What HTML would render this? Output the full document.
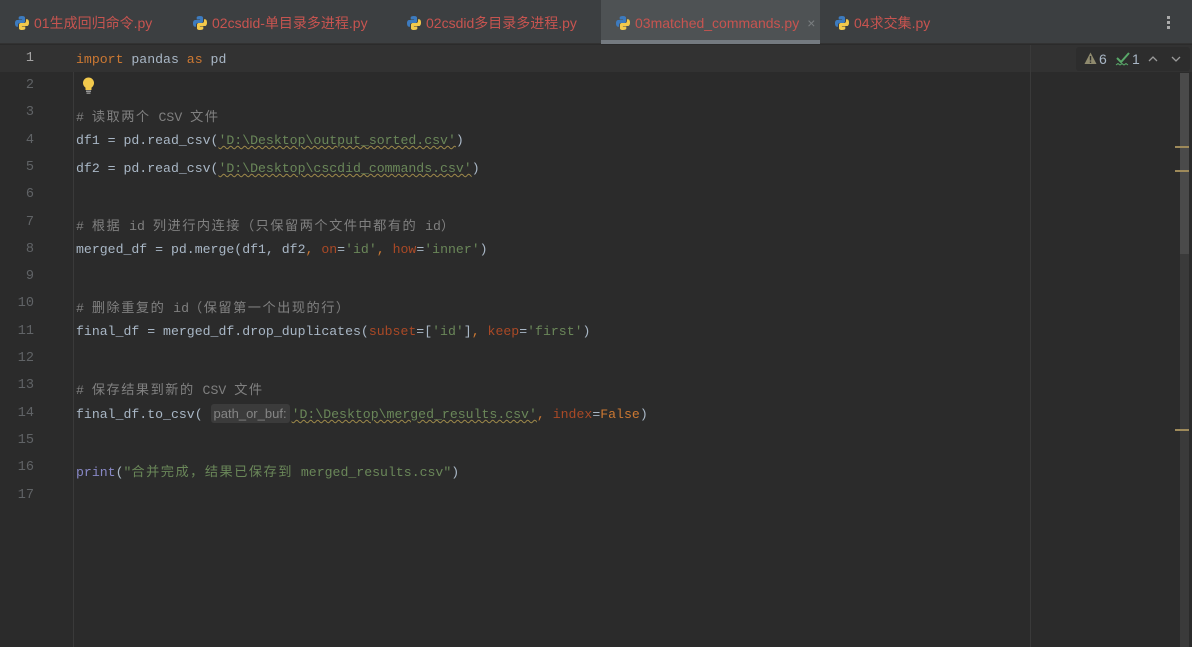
<!DOCTYPE html>
<html><head><meta charset="utf-8"><style>
*{margin:0;padding:0;box-sizing:border-box}
body{width:1192px;height:647px;background:#2b2b2b;overflow:hidden;position:relative;font-family:"Liberation Sans","Noto Sans CJK SC",sans-serif}
#tabs{position:absolute;left:0;top:0;width:1192px;height:44px;background:#3c3f41;border-bottom:1px solid #323232}
.tab{position:absolute;top:0;height:44px;line-height:47px;font-size:14px;color:#c75450;padding-left:34px;white-space:nowrap}
.tab svg{position:absolute;left:14px;top:15px}
.act{background:#4e5254;border-bottom:4px solid #747a80}
#gut{position:absolute;left:0;top:45px;width:74px;height:602px;background:#2b2b2b;border-right:1px solid #3a3a3a}
.cur{position:absolute;left:0;top:45px;width:1030px;height:27px;background:#323232}
.ln{position:absolute;left:0;width:34px;text-align:right;font:13.5px "Liberation Mono",monospace;color:#606366}
.code{position:absolute;left:76px;font:13.2px "Liberation Mono","Noto Sans CJK SC",monospace;color:#a9b7c6;white-space:pre}
.k{color:#cc7832}.s{color:#6a8759}.cm{color:#808080}.p{color:#aa4926}
.u{text-decoration:underline wavy #9e8a4a;text-decoration-thickness:1px}
.c{letter-spacing:1.5px}
#rdiv{position:absolute;left:1030px;top:45px;width:1px;height:602px;background:#3a3a3a}
#sb{position:absolute;left:1180px;top:73px;width:9px;height:574px;background:#3a3a3a}
#sbt{position:absolute;left:1180px;top:73px;width:9px;height:181px;background:#4a4a4a}
.mk{position:absolute;left:1175px;width:14px;height:2px;background:#9e8a5a}
.hint{background:#3b3b3b;color:#858585;font-family:"Liberation Sans",sans-serif;font-size:13px;border-radius:3px;padding:2px 3px;margin-right:2px}
</style></head><body>
<div id="tabs">
<div class="tab" style="left:0;width:180px"><svg width="16" height="16" viewBox="0 0 16 16"><path d="M8 1C4.5 1 4.7 2.5 4.7 2.5V4.5H8.1V5H3.2S1 4.8 1 8.3c0 3.5 1.9 3.4 1.9 3.4H4V10c0-2 1.7-2 1.7-2h3.5s1.8 0 1.8-1.8V2.8S11.3 1 8 1z" fill="#3d7bbf"/><path d="M8 15c3.5 0 3.3-1.5 3.3-1.5V11.5H7.9V11h4.9S15 11.2 15 7.7c0-3.5-1.9-3.4-1.9-3.4H12V6c0 2-1.7 2-1.7 2H6.8S5 8 5 9.8v3.4S4.7 15 8 15z" fill="#f2c94c"/></svg>01生成回归命令.py</div>
<div class="tab" style="left:178px;width:210px"><svg width="16" height="16" viewBox="0 0 16 16"><path d="M8 1C4.5 1 4.7 2.5 4.7 2.5V4.5H8.1V5H3.2S1 4.8 1 8.3c0 3.5 1.9 3.4 1.9 3.4H4V10c0-2 1.7-2 1.7-2h3.5s1.8 0 1.8-1.8V2.8S11.3 1 8 1z" fill="#3d7bbf"/><path d="M8 15c3.5 0 3.3-1.5 3.3-1.5V11.5H7.9V11h4.9S15 11.2 15 7.7c0-3.5-1.9-3.4-1.9-3.4H12V6c0 2-1.7 2-1.7 2H6.8S5 8 5 9.8v3.4S4.7 15 8 15z" fill="#f2c94c"/></svg>02csdid-单目录多进程.py</div>
<div class="tab" style="left:392px;width:210px"><svg width="16" height="16" viewBox="0 0 16 16"><path d="M8 1C4.5 1 4.7 2.5 4.7 2.5V4.5H8.1V5H3.2S1 4.8 1 8.3c0 3.5 1.9 3.4 1.9 3.4H4V10c0-2 1.7-2 1.7-2h3.5s1.8 0 1.8-1.8V2.8S11.3 1 8 1z" fill="#3d7bbf"/><path d="M8 15c3.5 0 3.3-1.5 3.3-1.5V11.5H7.9V11h4.9S15 11.2 15 7.7c0-3.5-1.9-3.4-1.9-3.4H12V6c0 2-1.7 2-1.7 2H6.8S5 8 5 9.8v3.4S4.7 15 8 15z" fill="#f2c94c"/></svg>02csdid多目录多进程.py</div>
<div class="tab act" style="left:601px;width:219px"><svg width="16" height="16" viewBox="0 0 16 16"><path d="M8 1C4.5 1 4.7 2.5 4.7 2.5V4.5H8.1V5H3.2S1 4.8 1 8.3c0 3.5 1.9 3.4 1.9 3.4H4V10c0-2 1.7-2 1.7-2h3.5s1.8 0 1.8-1.8V2.8S11.3 1 8 1z" fill="#3d7bbf"/><path d="M8 15c3.5 0 3.3-1.5 3.3-1.5V11.5H7.9V11h4.9S15 11.2 15 7.7c0-3.5-1.9-3.4-1.9-3.4H12V6c0 2-1.7 2-1.7 2H6.8S5 8 5 9.8v3.4S4.7 15 8 15z" fill="#f2c94c"/></svg>03matched_commands.py<span style="color:#7a7e80;margin-left:8px">×</span></div>
<div class="tab" style="left:820px;width:140px"><svg width="16" height="16" viewBox="0 0 16 16"><path d="M8 1C4.5 1 4.7 2.5 4.7 2.5V4.5H8.1V5H3.2S1 4.8 1 8.3c0 3.5 1.9 3.4 1.9 3.4H4V10c0-2 1.7-2 1.7-2h3.5s1.8 0 1.8-1.8V2.8S11.3 1 8 1z" fill="#3d7bbf"/><path d="M8 15c3.5 0 3.3-1.5 3.3-1.5V11.5H7.9V11h4.9S15 11.2 15 7.7c0-3.5-1.9-3.4-1.9-3.4H12V6c0 2-1.7 2-1.7 2H6.8S5 8 5 9.8v3.4S4.7 15 8 15z" fill="#f2c94c"/></svg>04求交集.py</div>
<div style="position:absolute;left:1167px;top:16px;width:3px"><div style="width:3px;height:3px;background:#aaa;margin-bottom:2px"></div><div style="width:3px;height:3px;background:#aaa;margin-bottom:2px"></div><div style="width:3px;height:3px;background:#aaa"></div></div>
</div>
<div id="gut"></div>
<div class="cur"></div>
<div class="cur" style="left:1031px;width:161px"></div>
<div id="rdiv"></div>
<div id="sb"></div><div id="sbt"></div>
<div class="mk" style="top:146px"></div><div class="mk" style="top:170px"></div><div class="mk" style="top:429px"></div>
<div style="position:absolute;left:1076px;top:47px;width:114px;height:24px;background:#2d2d2d;border-radius:3px;font-size:14px;color:#a9b7c6;line-height:24px">
<svg style="position:absolute;left:8px;top:5px" width="13" height="13" viewBox="0 0 13 13"><path d="M6.5 0.5L12.5 12H0.5Z" fill="#8f8a6e"/><rect x="5.8" y="4" width="1.4" height="4.5" fill="#2d2d2d"/><rect x="5.8" y="9.5" width="1.4" height="1.4" fill="#2d2d2d"/></svg>
<span style="position:absolute;left:23px">6</span>
<svg style="position:absolute;left:39px;top:5px" width="16" height="15" viewBox="0 0 16 15"><path d="M2 6l4 4 8-9" stroke="#59a869" stroke-width="2" fill="none"/><path d="M1 13l2-1.5 2 1.5 2-1.5 2 1.5 2-1.5 2 1.5" stroke="#59a869" fill="none"/></svg>
<span style="position:absolute;left:56px">1</span>
<svg style="position:absolute;left:72px;top:8px" width="10" height="7"><path d="M1 6l4-4 4 4" stroke="#9a9a9a" fill="none" stroke-width="1.3"/></svg>
<svg style="position:absolute;left:95px;top:9px" width="10" height="7"><path d="M1 1l4 4 4-4" stroke="#9a9a9a" fill="none" stroke-width="1.3"/></svg>
</div>
<svg style="position:absolute;left:82px;top:77px" width="13" height="17" viewBox="0 0 13 17"><circle cx="6.5" cy="6" r="5.5" fill="#f2c94c"/><rect x="3.5" y="10" width="6" height="3" fill="#f2c94c"/><rect x="4" y="13.5" width="5" height="1.5" fill="#999"/><rect x="4.5" y="15.5" width="4" height="1.3" fill="#999"/></svg>

<div class="ln" style="top:51px;color:#a4a3a3">1</div>
<div class="ln" style="top:78px">2</div>
<div class="ln" style="top:105px">3</div>
<div class="ln" style="top:133px">4</div>
<div class="ln" style="top:160px">5</div>
<div class="ln" style="top:187px">6</div>
<div class="ln" style="top:215px">7</div>
<div class="ln" style="top:242px">8</div>
<div class="ln" style="top:269px">9</div>
<div class="ln" style="top:296px">10</div>
<div class="ln" style="top:324px">11</div>
<div class="ln" style="top:351px">12</div>
<div class="ln" style="top:378px">13</div>
<div class="ln" style="top:406px">14</div>
<div class="ln" style="top:433px">15</div>
<div class="ln" style="top:460px">16</div>
<div class="ln" style="top:488px">17</div>

<div class="code" style="top:52px"><span class="k">import</span> pandas <span class="k">as</span> pd</div>
<div class="code cm" style="top:106px"># <span class="c">读取两个</span> CSV <span class="c">文件</span></div>
<div class="code" style="top:133px">df1 = pd.read_csv(<span class="s u">'D:\Desktop\output_sorted.csv'</span>)</div>
<div class="code" style="top:161px">df2 = pd.read_csv(<span class="s u">'D:\Desktop\cscdid_commands.csv'</span>)</div>
<div class="code cm" style="top:215px"># <span class="c">根据</span> id <span class="c">列进行内连接（只保留两个文件中都有的</span> id<span class="c">）</span></div>
<div class="code" style="top:242px">merged_df = pd.merge(df1, df2<span class="k">,</span> <span class="p">on</span>=<span class="s">'id'</span><span class="k">,</span> <span class="p">how</span>=<span class="s">'inner'</span>)</div>
<div class="code cm" style="top:297px"># <span class="c">删除重复的</span> id<span class="c">（保留第一个出现的行）</span></div>
<div class="code" style="top:324px">final_df = merged_df.drop_duplicates(<span class="p">subset</span>=[<span class="s">'id'</span>]<span class="k">,</span> <span class="p">keep</span>=<span class="s">'first'</span>)</div>
<div class="code cm" style="top:379px"># <span class="c">保存结果到新的</span> CSV <span class="c">文件</span></div>
<div class="code" style="top:406px">final_df.to_csv( <span class="hint">path_or_buf:</span><span class="s u">'D:\Desktop\merged_results.csv'</span><span class="k">,</span> <span class="p">index</span>=<span class="k">False</span>)</div>
<div class="code" style="top:461px"><span style="color:#8888c6">print</span>(<span class="s">"<span class="c">合并完成，结果已保存到</span> merged_results.csv"</span>)</div>
</body></html>
